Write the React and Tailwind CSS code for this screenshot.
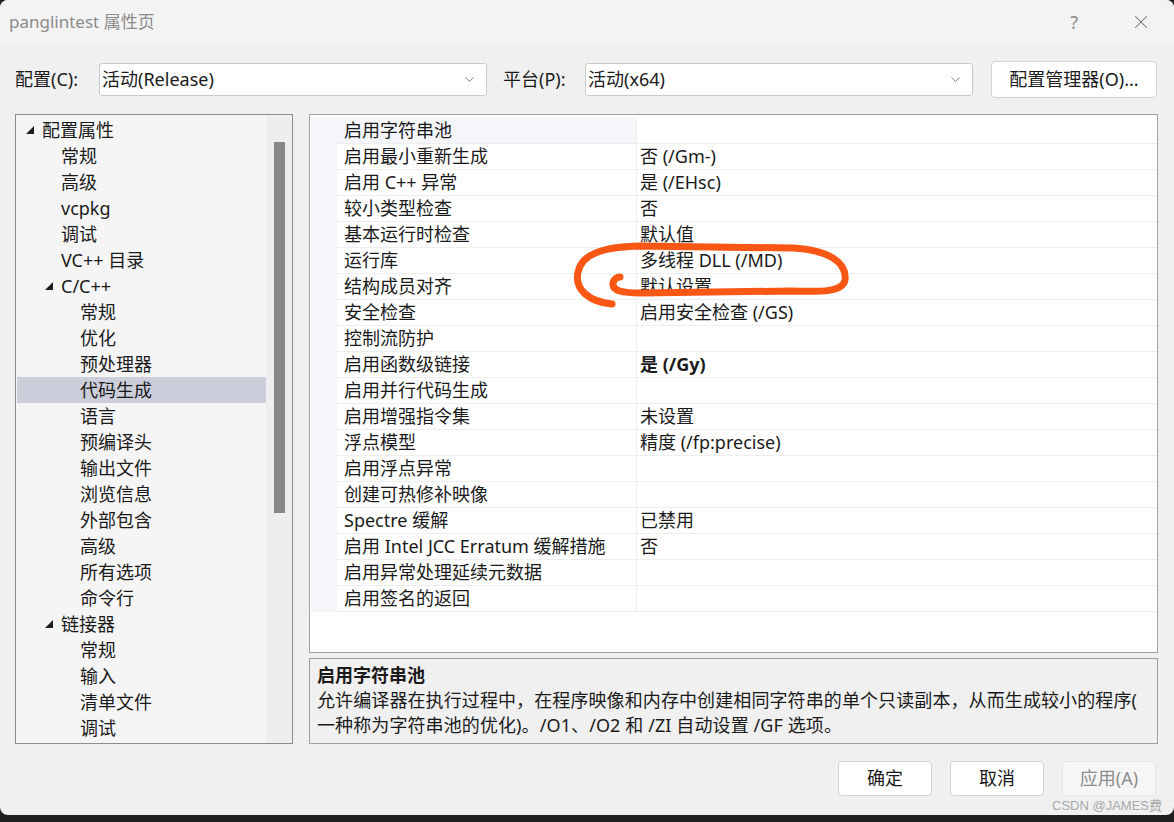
import React from 'react';
import { ChevronDown, X } from 'lucide-react';

const tree = [
    { text: '配置属性', level: 0, open: true },
    { text: '常规', level: 1 },
    { text: '高级', level: 1 },
    { text: 'vcpkg', level: 1 },
    { text: '调试', level: 1 },
    { text: 'VC++ 目录', level: 1 },
    { text: 'C/C++', level: 1, open: true },
    { text: '常规', level: 2 },
    { text: '优化', level: 2 },
    { text: '预处理器', level: 2 },
    { text: '代码生成', level: 2, selected: true },
    { text: '语言', level: 2 },
    { text: '预编译头', level: 2 },
    { text: '输出文件', level: 2 },
    { text: '浏览信息', level: 2 },
    { text: '外部包含', level: 2 },
    { text: '高级', level: 2 },
    { text: '所有选项', level: 2 },
    { text: '命令行', level: 2 },
    { text: '链接器', level: 1, open: true },
    { text: '常规', level: 2 },
    { text: '输入', level: 2 },
    { text: '清单文件', level: 2 },
    { text: '调试', level: 2 },
];

const indent = ['w-[9px]', 'w-[28px]', 'w-[47px]'];

const props = [
    ['启用字符串池', ''],
    ['启用最小重新生成', '否 (/Gm-)'],
    ['启用 C++ 异常', '是 (/EHsc)'],
    ['较小类型检查', '否'],
    ['基本运行时检查', '默认值'],
    ['运行库', '多线程 DLL (/MD)'],
    ['结构成员对齐', '默认设置'],
    ['安全检查', '启用安全检查 (/GS)'],
    ['控制流防护', ''],
    ['启用函数级链接', '是 (/Gy)', true],
    ['启用并行代码生成', ''],
    ['启用增强指令集', '未设置'],
    ['浮点模型', '精度 (/fp:precise)'],
    ['启用浮点异常', ''],
    ['创建可热修补映像', ''],
    ['Spectre 缓解', '已禁用'],
    ['启用 Intel JCC Erratum 缓解措施', '否'],
    ['启用异常处理延续元数据', ''],
    ['启用签名的返回', ''],
];

const Combo = ({ value }) => (
    <div className="w-[388px] h-[33px] bg-white border border-[#c9c9c9] rounded-[3px] flex items-center pl-[2px] pr-[9px]">
        <span className="flex-1">{value}</span>
        <ChevronDown size={15} strokeWidth={1.3} className="text-[#606060]" />
    </div>
);

const Btn = ({ children, disabled }) => (
    <button
        className={`w-[94px] h-[35px] rounded-[4px] border flex items-center justify-center ${disabled ? 'bg-[#f6f6f6] border-[#e6e6e6] text-[#8d8d8d]' : 'bg-white border-[#d2d2d2] text-[#1a1a1a]'}`}
    >
        {children}
    </button>
);

export default function App() {
    return (
        <div className="w-[1174px] h-[822px] bg-[#202020] relative overflow-hidden font-['Noto_Sans','Noto_Sans_CJK_SC',sans-serif] text-[18px] text-[#1a1a1a]">
            <div className="h-[815px] bg-[#f0f0f0] rounded-[8px] flex flex-col">
                {/* Title bar */}
                <div className="h-[44px] bg-[#f3f3f3] rounded-t-[8px] flex items-center pl-[9px] pr-[22px] text-[#8b8b8b] text-[17px]">
                    <span className="flex-1">panglintest 属性页</span>
                    <span className="text-[18px] mr-[52px]">?</span>
                    <X size={22} strokeWidth={1.1} className="text-[#6e6e6e]" />
                </div>

                {/* Config row */}
                <div className="flex items-center h-[37px] mt-[17px] pl-[15px] pr-[16px]">
                    <span className="w-[84px]">配置(C):</span>
                    <Combo value="活动(Release)" />
                    <span className="w-[82px] ml-[16px]">平台(P):</span>
                    <Combo value="活动(x64)" />
                    <button className="ml-[18px] w-[166px] h-[37px] bg-white border border-[#d2d2d2] rounded-[4px]">配置管理器(O)...</button>
                </div>

                {/* Main */}
                <div className="flex gap-[16px] mt-[16px] pl-[15px] pr-[16px]">
                    {/* Tree */}
                    <div className="w-[278px] h-[630px] border border-[#8c8c8c] bg-[#f5f5f5] flex">
                        <div className="flex-1 pt-[2px] pl-[1px]">
                            {tree.map((n, i) => (
                                <div key={i} className={`h-[26px] flex items-center ${n.selected ? 'bg-[#cccedb]' : ''}`}>
                                    <span className={indent[n.level]} />
                                    <span className="w-[16px] flex items-center">
                                        {n.open && (
                                            <svg width="8" height="8" viewBox="0 0 8 8">
                                                <polygon points="8,0 8,8 0,8" fill="#1e1e1e" />
                                            </svg>
                                        )}
                                    </span>
                                    <span>{n.text}</span>
                                </div>
                            ))}
                        </div>
                        <div className="w-[26px] bg-[#eeeeee] flex justify-center">
                            <div className="w-[11px] h-[371px] mt-[27px] bg-[#878787]" />
                        </div>
                    </div>

                    {/* Right column */}
                    <div className="flex-1 flex flex-col gap-[5px]">
                        <div className="h-[539px] border border-[#a0a0a0] bg-white pt-[3px] pl-[1px]">
                            {props.map(([name, value, bold], i) => (
                                <div key={i} className="h-[26px] flex">
                                    <div className="w-[26px] bg-[#f4f6fa]" />
                                    <div className={`w-[300px] flex items-center pl-[7px] border-r border-b border-[#eeeeee] ${i === 0 ? 'bg-[#f4f6fa]' : ''}`}>{name}</div>
                                    <div className={`flex-1 flex items-center pl-[3px] border-b border-[#eeeeee] ${bold ? 'font-bold' : ''}`}>{value}</div>
                                </div>
                            ))}
                        </div>
                        <div className="h-[86px] border border-[#a0a0a0] px-[7px] pt-[4px] leading-[25px]">
                            <div className="font-bold">启用字符串池</div>
                            <div className="tracking-[0.1px] whitespace-nowrap">
                                允许编译器在执行过程中，在程序映像和内存中创建相同字符串的单个只读副本，从而生成较小的程序(
                                <br />
                                一种称为字符串池的优化)。/O1、/O2 和 /ZI 自动设置 /GF 选项。
                            </div>
                        </div>
                    </div>
                </div>

                {/* Buttons */}
                <div className="flex justify-end gap-[18px] mt-[17px] pr-[18px]">
                    <Btn>确定</Btn>
                    <Btn>取消</Btn>
                    <Btn disabled>应用(A)</Btn>
                </div>
            </div>

            {/* Watermark */}
            <div className="absolute left-[1052px] top-[796px] text-[13px] text-[#a8a8a8] font-['Liberation_Sans','Noto_Sans_CJK_SC',sans-serif]">CSDN @JAMES费</div>

            {/* Hand-drawn annotation */}
            <svg className="absolute inset-0 pointer-events-none" width="1174" height="822" viewBox="0 0 1174 822">
                <path
                    d="M 612 304 C 590 302, 574 290, 578 272 C 582 254, 602 247, 640 246 L 792 248 C 830 250, 847 263, 845 280 C 843 292, 822 292, 792 291 L 642 293 C 622 293, 612 291, 613 283 C 614 279, 617 277, 620 277"
                    fill="none"
                    stroke="#fa5614"
                    strokeWidth="7"
                    strokeLinecap="round"
                    strokeLinejoin="round"
                />
            </svg>
        </div>
    );
}
